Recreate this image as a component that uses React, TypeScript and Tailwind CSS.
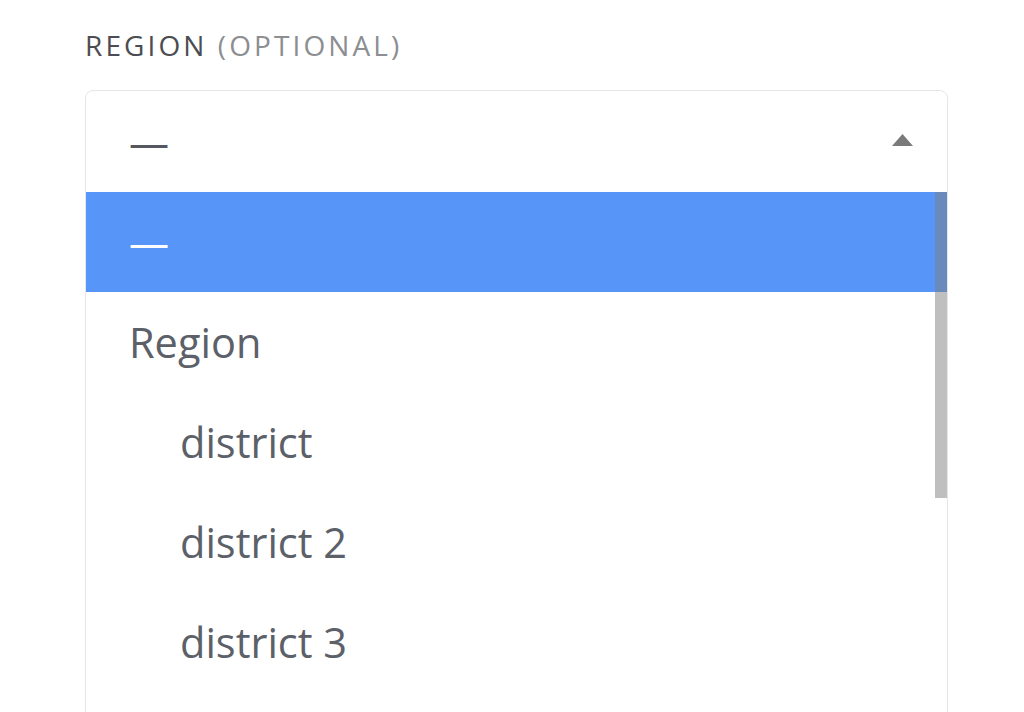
import React from 'react';

const OPTIONS: { label: string; indent: boolean }[] = [
    { label: 'Region', indent: false },
    { label: 'district', indent: true },
    { label: 'district 2', indent: true },
    { label: 'district 3', indent: true },
];

export default function App() {
    return (
        <div className="h-[712px] w-[1024px] overflow-hidden bg-white pt-[24px] pl-[85px] pr-[76px]" style={{ fontFamily: '"Open Sans", "Noto Sans", sans-serif' }}>
            {/* Label */}
            <div className="h-[42px] text-[28px] leading-[42px] tracking-[3.1px] text-[#4b4d52]">
                REGION <span className="text-[#8c8e92]">(OPTIONAL)</span>
            </div>

            {/* Select */}
            <div className="mt-[24px] rounded-t-[8px] border border-[#e6e6e6]">
                <div className="flex h-[101px] items-center justify-between pl-[43px] pr-[34px]">
                    <span className="text-[40px] text-[#55585e]">—</span>
                    <svg width="21" height="12" viewBox="0 0 21 12" className="mb-[4px]">
                        <polygon points="10.5,0 21,12 0,12" fill="#7a7a7a" />
                    </svg>
                </div>

                {/* Listbox */}
                <div className="relative min-h-[520px]">
                    <div className="flex h-[100px] items-center bg-[#5795f8] pl-[43px]">
                        <span className="text-[40px] text-white">—</span>
                    </div>
                    {OPTIONS.map(opt => (
                        <div key={opt.label} className={`flex h-[100px] items-center ${opt.indent ? 'pl-[94px]' : 'pl-[43px]'}`}>
                            <span className="text-[41.5px] text-[#5c6068]">{opt.label}</span>
                        </div>
                    ))}

                    {/* Scrollbar thumb */}
                    <div className="absolute right-0 top-0 h-[306px] w-[12px] bg-[rgba(128,128,128,0.5)]" />
                </div>
            </div>
        </div>
    );
}
